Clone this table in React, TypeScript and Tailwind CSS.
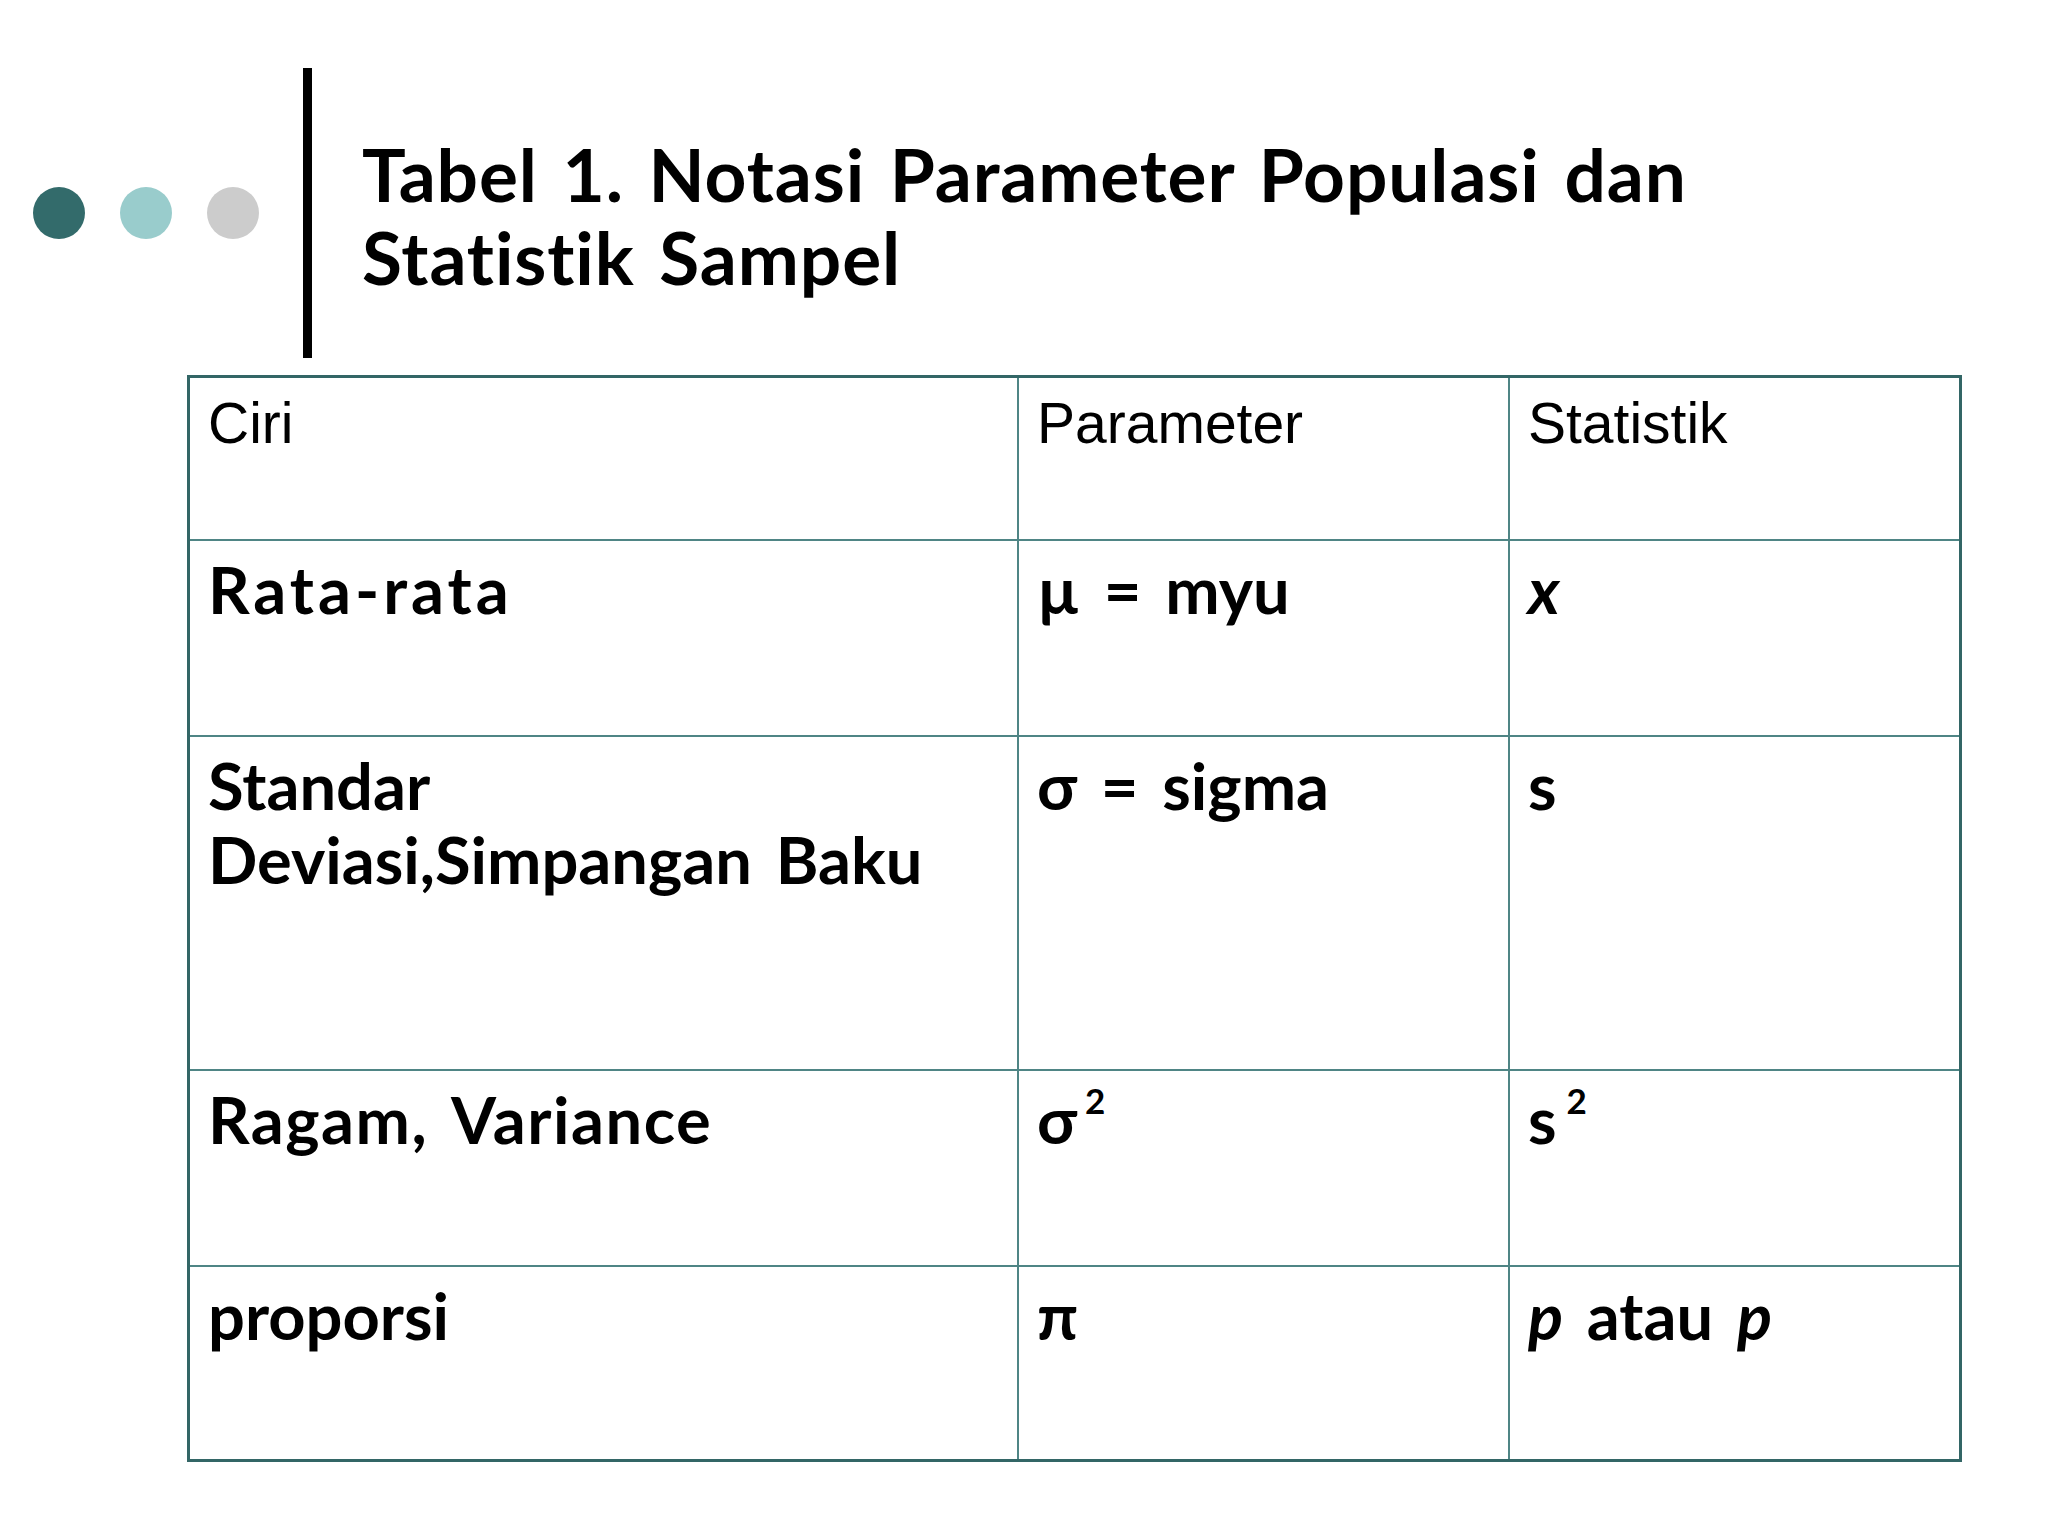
import React from 'react';

// slide: "Tabel 1. Notasi Parameter Populasi dan Statistik Sampel"

const body = "font-['Lato','Open_Sans','DejaVu_Sans',sans-serif] font-bold text-[65px] leading-[74px] [word-spacing:8px] [font-variant-ligatures:none] text-black";
const head = "font-['Liberation_Sans','Arial',sans-serif] font-normal text-[57px] leading-[1.2] text-black";
const line = 'border-[#4f8585]';

const Sup = ({ ml = 'ml-[8px]' }: { ml?: string }) => (
  <span className={`relative bottom-[30px] text-[35px] leading-none ${ml}`}>2</span>
);

export default function App() {
  return (
    <div className="w-[2048px] h-[1536px] bg-white overflow-hidden">
      {/* ---------- TITLE ---------- */}
      <div className="flex items-center h-[290px] mt-[68px]">
        <div className="flex items-center gap-[35px] pl-[33px]">
          <div className="w-[52px] h-[52px] rounded-full bg-[#336b6b]" />
          <div className="w-[52px] h-[52px] rounded-full bg-[#99cccc]" />
          <div className="w-[52px] h-[52px] rounded-full bg-[#cccccc]" />
        </div>
        <div className="self-stretch w-[9px] bg-black ml-[44px]" />
        <h1 className="ml-[50px] mt-[6px] font-['Lato','Open_Sans',sans-serif] font-bold text-[73px] leading-[83px] tracking-[0.9px] [word-spacing:6px] [font-variant-ligatures:none] text-black">
          Tabel 1. Notasi Parameter Populasi dan
          <br />
          Statistik Sampel
        </h1>
      </div>

      {/* ---------- TABLE ---------- */}
      <div className="mt-[17px] ml-[187px] w-[1775px] border-[3px] border-[#336666] grid grid-cols-[827px_491px_451px] grid-rows-[161px_196px_334px_196px_194px]">
        {/* header */}
        <div className={`pl-[18px] pt-[11px] ${head}`}>Ciri</div>
        <div className={`border-l-2 ${line} pl-[18px] pt-[11px] ${head}`}>Parameter</div>
        <div className={`border-l-2 ${line} pl-[18px] pt-[11px] ${head}`}>Statistik</div>

        {/* rata-rata */}
        <div className={`border-t-2 ${line} pl-[18px] pt-[11px] tracking-[4px] ${body}`}>Rata-rata</div>
        <div className={`border-t-2 border-l-2 ${line} pl-[18px] pt-[11px] ${body}`}>µ = myu</div>
        <div className={`border-t-2 border-l-2 ${line} pl-[18px] pt-[11px] ${body}`}>
          <i>x</i>
        </div>

        {/* standar deviasi */}
        <div className={`border-t-2 ${line} pl-[18px] pt-[11px] ${body}`}>
          Standar
          <br />
          Deviasi,Simpangan Baku
        </div>
        <div className={`border-t-2 border-l-2 ${line} pl-[18px] pt-[11px] ${body}`}>σ = sigma</div>
        <div className={`border-t-2 border-l-2 ${line} pl-[18px] pt-[11px] ${body}`}>s</div>

        {/* ragam */}
        <div className={`border-t-2 ${line} pl-[18px] pt-[11px] tracking-[1.5px] ${body}`}>Ragam, Variance</div>
        <div className={`border-t-2 border-l-2 ${line} pl-[18px] pt-[11px] ${body}`}>
          σ<Sup />
        </div>
        <div className={`border-t-2 border-l-2 ${line} pl-[18px] pt-[11px] ${body}`}>
          s<Sup ml="ml-[10px]" />
        </div>

        {/* proporsi */}
        <div className={`border-t-2 ${line} pl-[18px] pt-[11px] ${body}`}>proporsi</div>
        <div className={`border-t-2 border-l-2 ${line} pl-[18px] pt-[11px] ${body}`}>π</div>
        <div className={`border-t-2 border-l-2 ${line} pl-[18px] pt-[11px] ${body}`}>
          <i>p</i> atau <i>p</i>
        </div>
      </div>
    </div>
  );
}
